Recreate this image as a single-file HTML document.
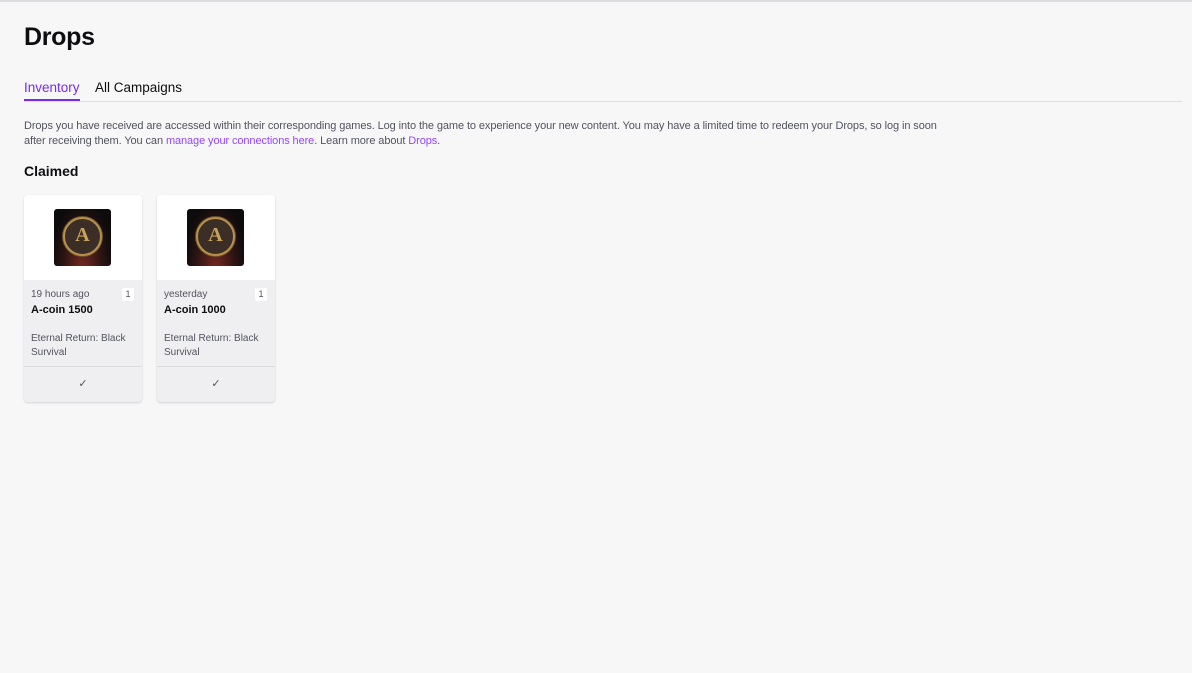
<!DOCTYPE html>
<html><head><style>
body{margin:0;width:1192px;height:673px;background:#f7f7f8;font-family:"Liberation Sans",sans-serif;color:#0e0e10;overflow:hidden;position:relative}
.topl{position:absolute;left:0;right:0;top:0;height:2px;background:#dcdcdf}
h1{position:absolute;left:24px;top:23px;margin:0;font-size:25px;font-weight:bold;letter-spacing:-0.3px}
.tabs{position:absolute;left:24px;top:79px;right:10px;height:22px;border-bottom:1px solid #dedee3}
.tab{position:absolute;top:1px;font-size:13.5px}
.t1{left:0;color:#772ce8;border-bottom:2px solid #772ce8;padding-bottom:4px}
.t2{left:71px}
.desc{position:absolute;left:24px;top:119px;font-size:11px;line-height:15px;color:#53535f;width:940px;letter-spacing:-0.1px}
.desc a{color:#9147ff;text-decoration:none}
.claimed{position:absolute;left:24px;top:163px;font-size:14px;font-weight:bold}
.card{position:absolute;top:195px;width:118px;height:207px;border-radius:4px;background:#efeff1;box-shadow:0 1px 2px rgba(0,0,0,.15);overflow:hidden}
.img{height:85px;background:#fff;position:relative}
.ic{position:absolute;left:30px;top:14px;width:57px;height:57px;border-radius:3px;background:radial-gradient(ellipse at 50% 110%,#7a2a22 0%,#2a1412 50%,#0d0b0c 80%)}
.coin{position:absolute;left:9px;top:8px;width:35px;height:35px;border-radius:50%;border:2px solid #b8904a;background:#3a2e26;box-shadow:0 0 0 1px #6b5330}
.coin span{position:absolute;left:0;right:0;top:5px;text-align:center;color:#c9a25a;font-size:20px;font-weight:bold;font-family:"Liberation Serif",serif}
.time{position:absolute;left:7px;top:94px;font-size:10px;color:#53535f}
.qty{position:absolute;right:8px;top:93px;width:12px;height:13px;background:#fff;border-radius:2px;font-size:9px;text-align:center;line-height:13px;color:#53535f}
.name{position:absolute;left:7px;top:109px;font-size:11px;font-weight:bold}
.game{position:absolute;left:7px;top:137px;font-size:10px;line-height:14px;color:#53535f;width:105px}
.foot{position:absolute;left:0;right:0;top:171px;height:36px;border-top:1px solid #dcdcdf;text-align:center;line-height:34px;color:#53535f;font-size:11px}
</style></head><body>
<div class="topl"></div>
<h1>Drops</h1>
<div class="tabs"><div class="tab t1">Inventory</div><div class="tab t2">All Campaigns</div></div>
<div class="desc">Drops you have received are accessed within their corresponding games. Log into the game to experience your new content. You may have a limited time to redeem your Drops, so log in soon<br>after receiving them. You can <a>manage your connections here</a>. Learn more about <a>Drops</a>.</div>
<div class="claimed">Claimed</div>
<div class="card" style="left:24px"><div class="img"><div class="ic"><div class="coin"><span>A</span></div></div></div>
<div class="time">19 hours ago</div><div class="qty">1</div><div class="name">A-coin 1500</div><div class="game">Eternal Return: Black Survival</div><div class="foot">✓</div></div>
<div class="card" style="left:157px"><div class="img"><div class="ic"><div class="coin"><span>A</span></div></div></div>
<div class="time">yesterday</div><div class="qty">1</div><div class="name">A-coin 1000</div><div class="game">Eternal Return: Black Survival</div><div class="foot">✓</div></div>
</body></html>
